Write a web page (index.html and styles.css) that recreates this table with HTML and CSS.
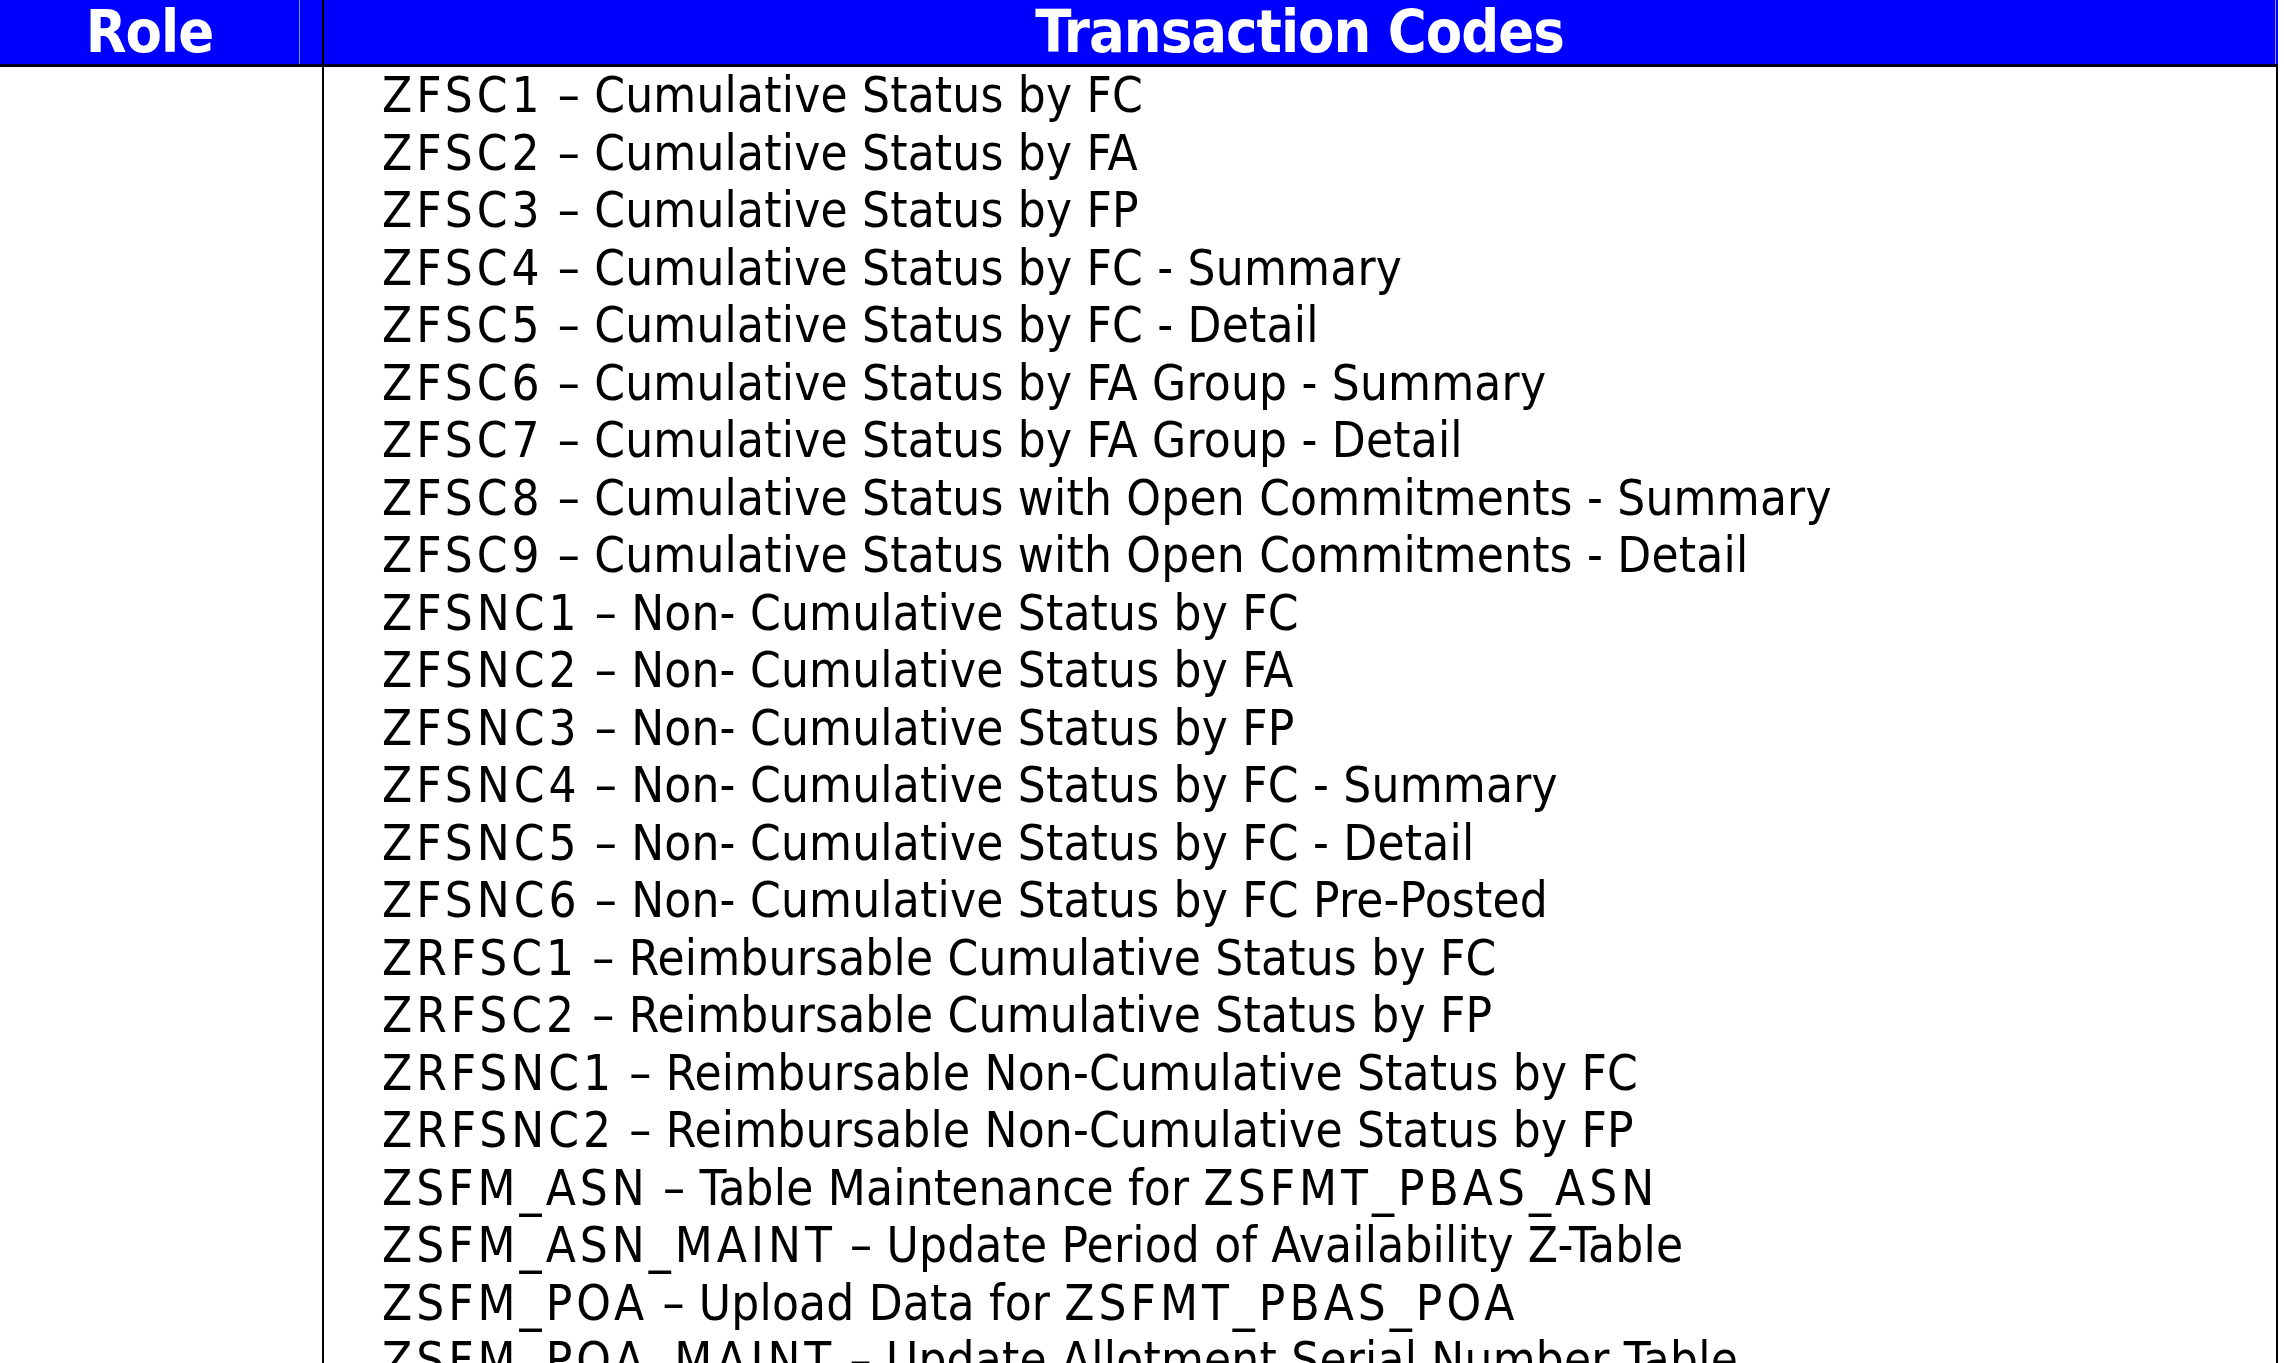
FILE: index.html
```html
<!DOCTYPE html>
<html lang="en">
<head>
    <meta charset="UTF-8">
    <meta name="viewport" content="width=device-width, initial-scale=1.0">
    <title>Roles and Transaction Codes</title>
    <link rel="stylesheet" href="styles.css">
</head>
<body>
    <div class="sheet">
        <div class="head-row">
            <div class="head-role"><span class="role-title">Role</span></div>
            <div class="head-codes">Transaction Codes</div>
        </div>
        <div class="body-row">
            <div class="role-cell"></div>
            <ul class="code-list">
                <li><span class="code">ZFSC1</span> – Cumulative Status by FC</li>
                <li><span class="code">ZFSC2</span> – Cumulative Status by FA</li>
                <li><span class="code">ZFSC3</span> – Cumulative Status by FP</li>
                <li><span class="code">ZFSC4</span> – Cumulative Status by FC - Summary</li>
                <li><span class="code">ZFSC5</span> – Cumulative Status by FC - Detail</li>
                <li><span class="code">ZFSC6</span> – Cumulative Status by FA Group - Summary</li>
                <li><span class="code">ZFSC7</span> – Cumulative Status by FA Group - Detail</li>
                <li><span class="code">ZFSC8</span> – Cumulative Status with Open Commitments - Summary</li>
                <li><span class="code">ZFSC9</span> – Cumulative Status with Open Commitments - Detail</li>
                <li><span class="code">ZFSNC1</span> – Non- Cumulative Status by FC</li>
                <li><span class="code">ZFSNC2</span> – Non- Cumulative Status by FA</li>
                <li><span class="code">ZFSNC3</span> – Non- Cumulative Status by FP</li>
                <li><span class="code">ZFSNC4</span> – Non- Cumulative Status by FC - Summary</li>
                <li><span class="code">ZFSNC5</span> – Non- Cumulative Status by FC - Detail</li>
                <li><span class="code">ZFSNC6</span> – Non- Cumulative Status by FC Pre-Posted</li>
                <li><span class="code">ZRFSC1</span> – Reimbursable Cumulative Status by FC</li>
                <li><span class="code">ZRFSC2</span> – Reimbursable Cumulative Status by FP</li>
                <li><span class="code">ZRFSNC1</span> – Reimbursable Non-Cumulative Status by FC</li>
                <li><span class="code">ZRFSNC2</span> – Reimbursable Non-Cumulative Status by FP</li>
                <li><span class="code">ZSFM_ASN</span> – Table Maintenance for <span class="code">ZSFMT_PBAS_ASN</span></li>
                <li><span class="code">ZSFM_ASN_MAINT</span> – Update Period of Availability Z-Table</li>
                <li><span class="code">ZSFM_POA</span> – Upload Data for <span class="code">ZSFMT_PBAS_POA</span></li>
                <li><span class="code">ZSFM_POA_MAINT</span> – Update Allotment Serial Number Table</li>
            </ul>
        </div>
    </div>
</body>
</html>
```

FILE: styles.css
```css
* {
    margin: 0;
    padding: 0;
    box-sizing: border-box;
}

html, body {
    background: white;
    height: 100%;
    overflow: hidden;
}

body {
    font-family: "DejaVu Sans Condensed", "DejaVu Sans", sans-serif;
    font-stretch: condensed;
    color: black;
}

.sheet {
    width: 2278px;
}

.head-row {
    display: grid;
    grid-template-columns: 322px 1fr;
    height: 67px;
    background: #0000ff;
    border-bottom: 3px solid #000018;
}

.head-role {
    padding-right: 22px;
}

.role-title {
    display: block;
    height: 64px;
    border-right: 1px solid #8a8aff;
    text-align: center;
}

.head-role,
.head-codes {
    color: white;
    font-weight: bold;
    font-size: 59px;
    line-height: 64px;
    letter-spacing: -1px;
}

.head-codes {
    border-left: 2px solid black;
    border-right: 1px solid #8a8aff;
    margin-right: 2px;
    text-align: center;
}

.body-row {
    display: grid;
    grid-template-columns: 322px 1fr;
    min-height: 1300px;
}

.code-list {
    list-style: none;
    border-left: 2px solid black;
    border-right: 2px solid black;
    padding-left: 58px;
    font-size: 49px;
    line-height: 57.5px;
    letter-spacing: 0.2px;
}

.code {
    letter-spacing: 4px;
}
```
